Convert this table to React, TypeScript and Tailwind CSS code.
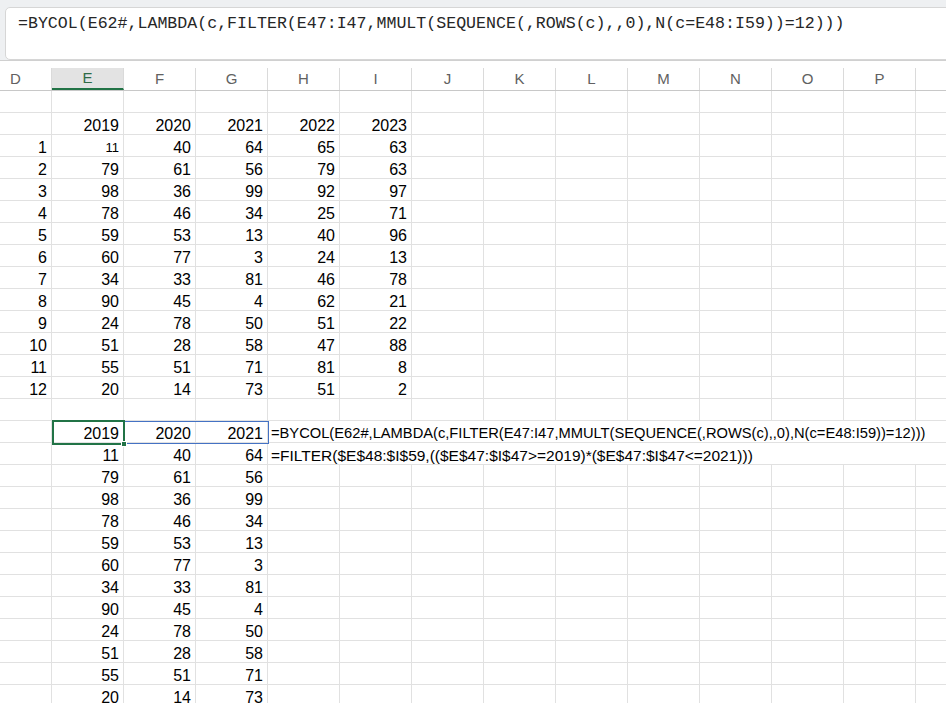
import React from 'react';

const HEAD = ['D', 'E', 'F', 'G', 'H', 'I', 'J', 'K', 'L', 'M', 'N', 'O', 'P', ''];

const DATA: number[][] = [
  [11, 40, 64, 65, 63],
  [79, 61, 56, 79, 63],
  [98, 36, 99, 92, 97],
  [78, 46, 34, 25, 71],
  [59, 53, 13, 40, 96],
  [60, 77, 3, 24, 13],
  [34, 33, 81, 46, 78],
  [90, 45, 4, 62, 21],
  [24, 78, 50, 51, 22],
  [51, 28, 58, 47, 88],
  [55, 51, 71, 81, 8],
  [20, 14, 73, 51, 2],
];

const FORMULA = '=BYCOL(E62#,LAMBDA(c,FILTER(E47:I47,MMULT(SEQUENCE(,ROWS(c),,0),N(c=E48:I59))=12)))';
const FILTER_F = '=FILTER($E$48:$I$59,(($E$47:$I$47>=2019)*($E$47:$I$47<=2021)))';

type Cell = string | number | null;

function Cell({ value, first, small }: { value: Cell; first?: boolean; small?: boolean }) {
  return (
    <div
      className={`${first ? 'w-[52px]' : 'w-[72px]'} shrink-0 h-full border-r border-[#e1e1e1] flex items-center justify-end pr-[4px] pt-[4px] ${small ? 'text-[13px]' : 'text-[16px]'}`}
    >
      {value}
    </div>
  );
}

// a row: D..I values, optional text that spills from H onward
function Row({ cells, spill, spillSize, small }: { cells: Cell[]; spill?: string; spillSize?: string; small?: number }) {
  const filled = HEAD.map((_, i) => (i < cells.length ? cells[i] : null));
  const shown = spill ? filled.slice(0, 4) : filled;
  return (
    <div className="flex h-[22px] border-b border-[#e1e1e1] text-black">
      {shown.map((v, i) => (
        <Cell key={i} value={v} first={i === 0} small={small === i} />
      ))}
      {spill && (
        <div className={`flex-1 flex items-center pl-[3px] pt-[4px] whitespace-nowrap ${spillSize}`}>{spill}</div>
      )}
    </div>
  );
}

export default function App() {
  return (
    <div className="w-[946px] h-[703px] overflow-hidden bg-white relative" style={{ fontFamily: '"Liberation Sans", Arial, sans-serif' }}>
      {/* formula bar */}
      <div className="bg-[#eef0f2] pt-[7px] border-b border-[#d0d0d0]">
        <div className="ml-[5px] w-[960px] h-[53px] bg-white border border-[#d6d6d6] rounded-[5px] pl-[12px] pt-[5px] text-[16.6px] leading-[22px] text-[#262626] whitespace-nowrap" style={{ fontFamily: '"Liberation Mono", "DejaVu Sans Mono", monospace' }}>
          {FORMULA}
        </div>
      </div>
      <div className="h-[7px] bg-white" />
      {/* column headers */}
      <div className="flex h-[23px] border-b border-[#c8c8c8] text-[15px] text-[#616161]">
        {HEAD.map((h, i) => (
          <div
            key={i}
            className={`${i === 0 ? 'w-[52px] justify-start pl-[10px]' : 'w-[72px] justify-center'} shrink-0 h-full border-r border-[#dadada] flex items-center ${h === 'E' ? 'bg-[#e3e3e3] border-b-2 border-b-[#217346] text-[#2f6b47]' : ''}`}
          >
            {h}
          </div>
        ))}
      </div>
      {/* grid */}
      <Row cells={[]} />
      <Row cells={[null, 2019, 2020, 2021, 2022, 2023]} />
      {DATA.map((r, i) => (
        <Row key={i} cells={[i + 1, ...r]} small={i === 0 ? 1 : undefined} />
      ))}
      <Row cells={[]} />
      <Row cells={[null, 2019, 2020, 2021]} spill={FORMULA} spillSize="text-[14.7px]" />
      <Row cells={[null, 11, 40, 64]} spill={FILTER_F} spillSize="text-[15.5px]" />
      {DATA.slice(1).map((r, i) => (
        <Row key={i} cells={[null, r[0], r[1], r[2]]} />
      ))}

      {/* selection overlays */}
      <div className="absolute left-[52px] top-[421px] w-[217px] h-[23px] border border-[#4472c4]" />
      <div className="absolute left-[52px] top-[420px] w-[73px] h-[25px] border-2 border-[#217346]" />
      <div className="absolute left-[121px] top-[441px] w-[6px] h-[6px] bg-[#217346] border border-white" />
    </div>
  );
}
